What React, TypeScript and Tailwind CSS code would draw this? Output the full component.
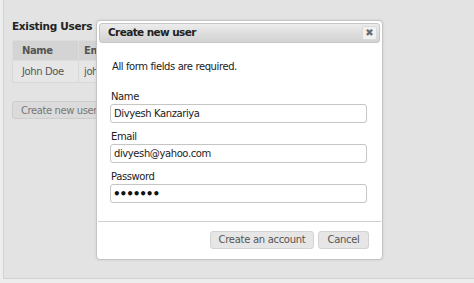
import React from "react";

const font = { fontFamily: '"DejaVu Sans", Verdana, sans-serif' };

function Field({ label, value, dots = false }: { label: string; value: string; dots?: boolean }) {
  return (
    <div className="flex flex-col">
      <label className="text-[10px] leading-[12px] tracking-[-0.4px] text-[#222] mb-[1px] ml-[1px] mt-[1px]">{label}</label>
      <input
        readOnly
        type="text"
        value={value}
        className={
          dots
            ? "w-[257px] h-[19px] border border-[#c5c5c5] rounded-[3px] px-[2px] text-[12px] font-bold tracking-[-1.1px] text-[#111] bg-white outline-none"
            : "w-[257px] h-[19px] border border-[#c5c5c5] rounded-[3px] px-[3px] text-[10px] tracking-[-0.4px] text-[#222] bg-white outline-none"
        }
        style={font}
      />
    </div>
  );
}

export default function App() {
  return (
    <div className="relative w-[474px] h-[283px] bg-[#ededed] overflow-hidden" style={font}>
      <div className="ml-[3px] w-[471px] h-[279px] bg-[#e3e3e3] border-l border-b border-[#d2d2d2] pl-[8px] pt-[20px]">
        <h2 className="text-[10.5px] leading-[12px] tracking-[-0.3px] font-bold text-[#222]">Existing Users</h2>
        <table className="mt-[8px] border-collapse text-[10px] tracking-[-0.4px]">
          <thead>
            <tr className="bg-[#d4d4d4] h-[20px]">
              <th className="w-[66px] text-left pl-[9px] font-bold text-[#555] border border-[#dcdcdc]">Name</th>
              <th className="w-[120px] text-left pl-[5px] font-bold text-[#555] border border-[#dcdcdc]">
                <div className="w-[13px] overflow-hidden whitespace-nowrap">Email</div>
              </th>
            </tr>
          </thead>
          <tbody>
            <tr className="h-[22px] bg-[#e6e6e6]">
              <td className="pl-[9px] text-[#555] border border-[#d8d8d8]">John Doe</td>
              <td className="pl-[5px] text-[#555] border border-[#d8d8d8]">
                <div className="w-[13px] overflow-hidden whitespace-nowrap">john@example.com</div>
              </td>
            </tr>
          </tbody>
        </table>
        <button className="mt-[18px] h-[18px] w-[100px] overflow-hidden whitespace-nowrap text-left px-[8px] bg-[#dbdbdb] border border-[#cdcdcd] rounded-[3px] text-[10px] tracking-[-0.4px] text-[#777]" style={font}>
          <span className="inline-block w-[76px] overflow-hidden align-top">Create new user</span>
        </button>
      </div>

      <div className="absolute left-[96px] top-[20px] w-[287px] h-[240px] bg-white border border-[#c4c4c4] rounded-[4px] p-[2px] shadow-[0_0_3px_rgba(0,0,0,0.1)] flex flex-col">
        <div className="h-[20px] rounded-[3px] border border-[#c6c6c6] bg-gradient-to-b from-[#ececec] to-[#d2d2d2] flex items-center justify-between pl-[8px] pr-[2px]">
          <span className="text-[10.5px] font-bold tracking-[-0.6px] text-[#222]">Create new user</span>
          <span className="w-[15px] h-[14px] bg-[#f1f1f1] border border-[#dadada] rounded-[2px] flex items-center justify-center text-[10px] font-bold text-[#6a6a6a] leading-none">✖</span>
        </div>
        <div className="pl-[11px] pt-[18px] flex-1">
          <p className="text-[10px] leading-[12px] tracking-[-0.4px] text-[#222] ml-[2px]">All form fields are required.</p>
          <div className="mt-[17px] flex flex-col gap-[7px]">
            <Field label="Name" value="Divyesh Kanzariya" />
            <Field label="Email" value="divyesh@yahoo.com" />
            <Field label="Password" value="•••••••" dots />
          </div>
        </div>
        <div className="border-t border-[#d0d0d0] -mx-[1px] h-[36px] flex items-center justify-end gap-[4px] pr-[12px]">
          <button className="h-[18px] w-[104px] bg-[#e6e6e6] border border-[#d3d3d3] rounded-[3px] text-[10px] tracking-[-0.3px] text-[#555]" style={font}>
            Create an account
          </button>
          <button className="h-[18px] w-[51px] bg-[#e6e6e6] border border-[#d3d3d3] rounded-[3px] text-[10px] tracking-[-0.3px] text-[#555]" style={font}>
            Cancel
          </button>
        </div>
      </div>
    </div>
  );
}
